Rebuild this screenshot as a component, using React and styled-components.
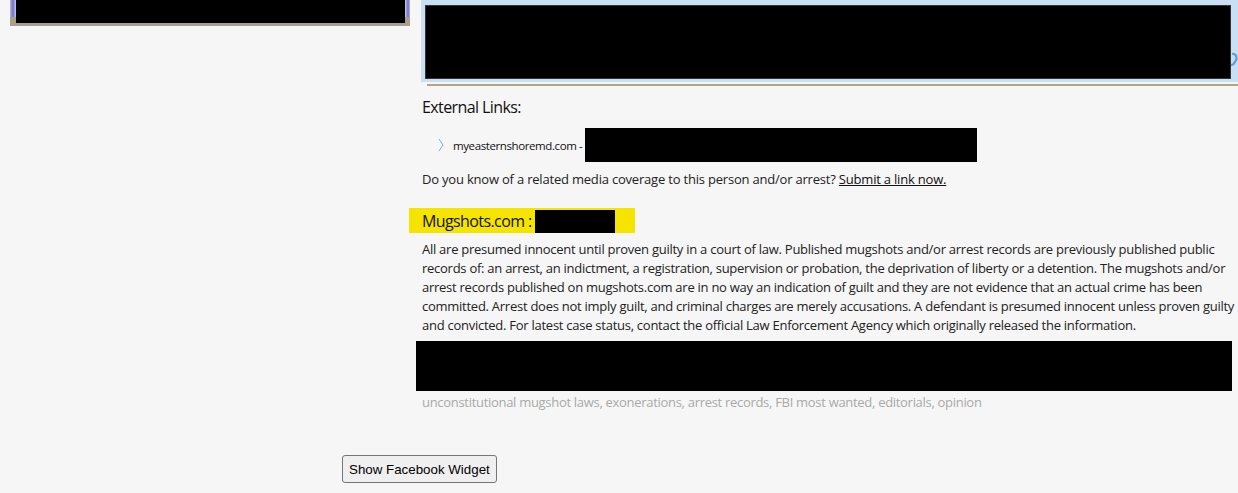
import React from 'react';
import styled, { createGlobalStyle } from 'styled-components';

const Global = createGlobalStyle`
  html, body {
    margin: 0;
    padding: 0;
    background: #f6f6f6;
  }
  body {
    font-family: "Open Sans", "Noto Sans", sans-serif;
    color: #222;
    overflow: hidden;
  }
`;

const Page = styled.div`
  width: 1238px;
  height: 493px;
  position: relative;
  overflow: hidden;
`;

const Columns = styled.div`
  display: flex;
  align-items: flex-start;
  padding-left: 10px;
  gap: 6px;
`;

const LeftBanner = styled.div`
  position: relative;
  width: 400px;
  height: 26px;
  background: #a8a08a;
`;

const BannerTop = styled.div`
  height: 17px;
  background:
    linear-gradient(90deg, #b8b6e8 0, #6f6fc8 3px, #c9c7f0 6px, transparent 6px),
    linear-gradient(270deg, #b8b6e8 0, #6f6fc8 2px, #c9c7f0 5px, transparent 5px),
    #e8e8f4;
`;

const Redact = styled.div`
  background: #000;
  width: ${p => p.w || 'auto'};
  height: ${p => p.h}px;
`;

const BannerRedact = styled(Redact)`
  position: absolute;
  left: 6px;
  right: 5px;
  top: 0;
`;

const Main = styled.div`
  flex: 1;
  min-width: 0;
  display: flex;
  flex-direction: column;
`;

const TopPanel = styled.div`
  margin-left: 5px;
  margin-right: -20px;
  padding: 5px 27px 3px 4px;
  background: #c9e0f4;
  position: relative;
`;

const TopRedact = styled(Redact)`
  border: 1px solid #333;
`;

const Swirl = styled.svg`
  position: absolute;
  right: 20px;
  top: 52px;
`;

const TanRule = styled.div`
  height: 2px;
  background: #b3a583;
  margin: 2px -20px 0 11px;
`;

const Heading = styled.h3`
  margin: 10px 0 0 6px;
  font-size: 16px;
  font-weight: 400;
  line-height: 22px;
  letter-spacing: -0.6px;
  color: #111;
`;

const LinkRow = styled.div`
  display: flex;
  align-items: center;
  margin: 10px 0 0 22px;
  gap: 5px;
  font-size: 11.5px;
  letter-spacing: -0.4px;
  color: #111;
`;

const LinkText = styled.span`
  margin-left: 4px;
  margin-right: -2px;
`;

const Para = styled.p`
  margin: ${p => p.m || '0'};
  padding-left: 6px;
  font-size: 13px;
  line-height: 19px;
  letter-spacing: ${p => p.ls || '-0.2px'};
  color: ${p => p.c || '#222'};
`;

const Submit = styled.a`
  color: #111;
  text-decoration: underline;
`;

const Highlight = styled.div`
  display: flex;
  align-items: center;
  margin: 19px 0 0 -7px;
  padding: 0 0 0 13px;
  width: 213px;
  height: 25px;
  background: #f5e400;
  font-size: 16px;
  letter-spacing: -0.6px;
  color: #111;
`;

const HighlightRedact = styled(Redact)`
  margin-left: 3px;
  align-self: flex-end;
`;

const Disclaimer = styled(Redact)`
  margin-top: 6px;
`;

const ButtonRow = styled.div`
  padding: 43px 0 0 342px;
`;

const FbButton = styled.button`
  font-family: "Liberation Sans", Arial, sans-serif;
  font-size: 13.33px;
  height: 28px;
  padding: 0 6px;
  color: #000;
  background: #efefef;
  border: 1px solid #767676;
  border-radius: 3px;
`;

export default function App() {
  return (
    <Page>
      <Global />
      <Columns>
        <LeftBanner>
          <BannerTop />
          <BannerRedact h={23} />
        </LeftBanner>
        <Main>
          <TopPanel>
            <TopRedact h={72} />
            <Swirl width="8" height="14" viewBox="0 0 8 14">
              <path d="M2 2 C6 1 8 6 5 10 C4 12 2 13 1 13" fill="none" stroke="#5a9ee0" strokeWidth="2.2" />
            </Swirl>
          </TopPanel>
          <TanRule />
          <Heading>External Links:</Heading>
          <LinkRow>
            <svg width="6" height="14" viewBox="0 0 6 14">
              <polyline points="1,1 5,7 1,13" fill="none" stroke="#7fa6d6" strokeWidth="1" />
            </svg>
            <LinkText>myeasternshoremd.com -</LinkText>
            <Redact w="392px" h={34} />
          </LinkRow>
          <Para m="8px 0 0 0">
            Do you know of a related media coverage to this person and/or arrest? <Submit href="#">Submit a link now.</Submit>
          </Para>
          <Highlight>
            Mugshots.com :
            <HighlightRedact w="80px" h={23} />
          </Highlight>
          <Para m="7px -8px 0 0" ls="-0.26px">
            All are presumed innocent until proven guilty in a court of law. Published mugshots and/or arrest records are previously published public records of: an arrest, an indictment, a registration, supervision or probation, the deprivation of liberty or a detention. The mugshots and/or arrest records published on mugshots.com are in no way an indication of guilt and they are not evidence that an actual crime has been committed. Arrest does not imply guilt, and criminal charges are merely accusations. A defendant is presumed innocent unless proven guilty and convicted. For latest case status, contact the official Law Enforcement Agency which originally released the information.
          </Para>
          <Disclaimer w="816px" h={50} />
          <Para m="2px 0 0 0" c="#a9a9a9" ls="-0.3px">
            unconstitutional mugshot laws, exonerations, arrest records, FBI most wanted, editorials, opinion
          </Para>
        </Main>
      </Columns>
      <ButtonRow>
        <FbButton>Show Facebook Widget</FbButton>
      </ButtonRow>
    </Page>
  );
}
